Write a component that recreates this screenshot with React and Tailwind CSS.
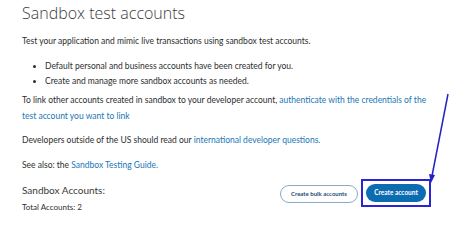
import React from "react";

const Link = ({ children }) => <span className="text-[#2176b7]">{children}</span>;

export default function App() {
    return (
        <div className="relative w-[474px] h-[230px] overflow-hidden bg-white text-[#2c2e2f]" style={{ fontFamily: 'Lato, sans-serif' }}>
            <div className="pl-[22px] pr-[20px] pt-[1px]">
                <h1 className="text-[16px] leading-[24px] font-light text-[#3c3c3c]" style={{ fontFamily: '"Open Sans", sans-serif' }}>Sandbox test accounts</h1>

                <p className="mt-[10px] text-[8.5px] leading-[13px]">Test your application and mimic live transactions using sandbox test accounts.</p>

                <ul className="mt-[11px] pl-[23px] list-disc text-[8.5px] leading-[15px]">
                    <li>Default personal and business accounts have been created for you.</li>
                    <li>Create and manage more sandbox accounts as needed.</li>
                </ul>

                <p className="mt-[3px] text-[8.5px] leading-[16px] w-[420px]">
                    To link other accounts created in sandbox to your developer account, <Link>authenticate with the credentials of the test account you want to link</Link>
                </p>

                <p className="mt-[10px] text-[8.5px] leading-[13px]">
                    Developers outside of the US should read our <Link>international developer questions.</Link>
                </p>

                <p className="mt-[12px] text-[8.5px] leading-[13px]">
                    See also: the <Link>Sandbox Testing Guide.</Link>
                </p>

                <div className="mt-[8px] flex items-start justify-between w-[409px]">
                    <div>
                        <p className="text-[10px] leading-[18px] pt-[1px] text-[#3a3a3a]">Sandbox Accounts:</p>
                        <p className="mt-[3px] text-[8px] leading-[11px]">Total Accounts: 2</p>
                    </div>
                    <div className="flex items-center gap-[3px]">
                        <button className="w-[78px] h-[18px] rounded-full border border-[#8aa9c4] text-[6px] font-bold text-[#1d4e78] bg-white">Create bulk accounts</button>
                        <div className="border-2 border-[#2b24d6] p-[3px] -mt-[1px]">
                            <button className="block w-[60px] h-[18px] rounded-full bg-[#0b6cb1] text-[6.5px] font-bold text-white">Create account</button>
                        </div>
                    </div>
                </div>
            </div>

            <svg className="absolute left-0 top-0" width="474" height="230" viewBox="0 0 474 230">
                <line x1="448" y1="94" x2="432" y2="176" stroke="#2222c4" strokeWidth="1.5" />
                <polygon points="429,174 435,175 431,183" fill="#2222c4" />
            </svg>
        </div>
    );
}
